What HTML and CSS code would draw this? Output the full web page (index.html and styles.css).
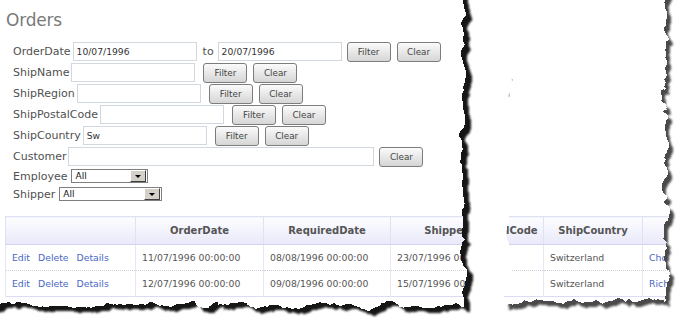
FILE: index.html
```html
<!DOCTYPE html>
<html lang="en">
<head>
<meta charset="UTF-8">
<title>Orders</title>
<link rel="stylesheet" href="styles.css">
</head>
<body>
<div class="sheet">
	<div class="page left">
		<h1>Orders</h1>
		<div class="filters">
			<div class="row">
				<label>OrderDate</label><input class="txt" type="text" value="10/07/1996">
				<span class="to">to</span><input class="txt" type="text" value="20/07/1996">
				<button class="btn first tight">Filter</button><button class="btn">Clear</button>
			</div>
			<div class="row">
				<label>ShipName</label><input class="txt" type="text">
				<button class="btn first">Filter</button><button class="btn">Clear</button>
			</div>
			<div class="row">
				<label>ShipRegion</label><input class="txt" type="text">
				<button class="btn first">Filter</button><button class="btn">Clear</button>
			</div>
			<div class="row">
				<label>ShipPostalCode</label><input class="txt" type="text">
				<button class="btn first">Filter</button><button class="btn">Clear</button>
			</div>
			<div class="row">
				<label>ShipCountry</label><input class="txt" type="text" value="Sw">
				<button class="btn first">Filter</button><button class="btn">Clear</button>
			</div>
			<div class="row">
				<label>Customer</label><input class="txt wide" type="text">
				<button class="btn first tight">Clear</button>
			</div>
			<div class="row sel">
				<label>Employee</label>
				<span class="select emp"><span class="val">All</span><span class="arr"></span></span>
			</div>
			<div class="row sel">
				<label>Shipper</label>
				<span class="select shp"><span class="val">All</span><span class="arr"></span></span>
			</div>
		</div>

		<table class="grid main">
			<colgroup><col class="c1"><col class="c2"><col class="c3"><col class="c4"></colgroup>
			<thead>
				<tr><th></th><th>OrderDate</th><th>RequiredDate</th><th>ShippedDate</th></tr>
			</thead>
			<tbody>
				<tr>
					<td><a href="#">Edit</a><a href="#">Delete</a><a href="#">Details</a></td>
					<td>11/07/1996 00:00:00</td><td>08/08/1996 00:00:00</td><td>23/07/1996 00:00:00</td>
				</tr>
				<tr>
					<td><a href="#">Edit</a><a href="#">Delete</a><a href="#">Details</a></td>
					<td>12/07/1996 00:00:00</td><td>09/08/1996 00:00:00</td><td>15/07/1996 00:00:00</td>
				</tr>
			</tbody>
		</table>
	</div>

	<div class="page right">
		<table class="grid shifted">
			<colgroup><col class="p1"><col class="p2"><col class="p3"></colgroup>
			<thead>
				<tr><th>ShipPostalCode</th><th>ShipCountry</th><th>ShipName</th></tr>
			</thead>
			<tbody>
				<tr><td>3012</td><td>Switzerland</td><td><a href="#">Chop-suey Chinese</a></td></tr>
				<tr><td>1203</td><td>Switzerland</td><td><a href="#">Richter Supermarkt</a></td></tr>
			</tbody>
		</table>
	</div>
</div>

<!-- torn paper edges, drawn over the page -->
<svg class="tear" width="684" height="330" viewBox="0 0 684 330">
	<defs>
		<filter id="rip" filterUnits="userSpaceOnUse" x="-40" y="-40" width="764" height="410" color-interpolation-filters="sRGB">
			<feTurbulence type="fractalNoise" baseFrequency="0.045" numOctaves="4" seed="7" result="n"/>
			<feDisplacementMap in="SourceGraphic" in2="n" scale="16" xChannelSelector="R" yChannelSelector="G"/>
		</filter>
		<filter id="dropL" filterUnits="userSpaceOnUse" x="-40" y="-40" width="764" height="410" color-interpolation-filters="sRGB">
			<feTurbulence type="fractalNoise" baseFrequency="0.045" numOctaves="4" seed="7" result="n"/>
			<feDisplacementMap in="SourceGraphic" in2="n" scale="16" xChannelSelector="R" yChannelSelector="G"/>
			<feOffset dx="6" dy="5"/>
			<feGaussianBlur stdDeviation="1.1"/>
		</filter>
		<filter id="dropR" filterUnits="userSpaceOnUse" x="-40" y="-40" width="764" height="410" color-interpolation-filters="sRGB">
			<feTurbulence type="fractalNoise" baseFrequency="0.045" numOctaves="4" seed="7" result="n"/>
			<feDisplacementMap in="SourceGraphic" in2="n" scale="16" xChannelSelector="R" yChannelSelector="G"/>
			<feOffset dx="4" dy="5"/>
			<feGaussianBlur stdDeviation="1.2"/>
		</filter>
		<mask id="outside" maskUnits="userSpaceOnUse" x="0" y="0" width="684" height="330">
			<rect width="684" height="330" fill="#fff"/>
			<g filter="url(#rip)" fill="#000">
				<rect x="-40" y="-40" width="503" height="346"/>
				<rect x="509" y="-40" width="157" height="342"/>
			</g>
		</mask>
	</defs>
	<g mask="url(#outside)">
		<rect width="684" height="330" fill="#fff"/>
		<rect x="-40" y="-40" width="503" height="346" fill="#161616" filter="url(#dropL)"/>
		<rect x="509" y="-40" width="157" height="342" fill="#4a4a4a" filter="url(#dropR)"/>
	</g>
</svg>
</body>
</html>
```

FILE: styles.css
```css
body{
	margin:0;
	background:#fff;
	font-family:"DejaVu Sans", Verdana, sans-serif;
	color:#505050;
	position:relative;
	width:684px;
	height:330px;
	overflow:hidden;
}
.sheet{
	display:flex;
	height:330px;
}
.page{
	flex:none;
	height:330px;
	overflow:hidden;
}
.left{
	width:480px;
}
.right{
	width:184px;
	margin-left:20px;
}
.tear{
	position:absolute;
	top:0;
	left:0;
	pointer-events:none;
}
h1{
	margin:9px 0 0 6px;
	font-size:17px;
	line-height:22px;
	font-weight:normal;
	letter-spacing:-0.2px;
	color:#7a7a7a;
}

/* filter rows */
.filters{
	margin:10px 0 0 13px;
}
.row{
	display:flex;
	align-items:center;
	height:21px;
	white-space:nowrap;
}
.row.sel{
	height:18px;
}
.row label{
	font-size:11px;
	margin-right:2px;
}
.txt{
	box-sizing:border-box;
	width:124px;
	height:19px;
	margin:0;
	padding:0 3px;
	border:1px solid #d2d8e0;
	background:#fff;
	font-family:"DejaVu Sans", Verdana, sans-serif;
	font-size:9.2px;
	color:#333;
	outline:none;
}
.txt.wide{
	width:306px;
}
.to{
	font-size:11px;
	margin:0 4px 0 6px;
}
.btn{
	box-sizing:border-box;
	width:44px;
	height:20px;
	margin:0 0 0 6px;
	padding:0;
	border:1px solid #7c7c7c;
	border-radius:3px;
	background:linear-gradient(#fbfbfb, #e6e6e6 55%, #d6d6d6);
	font-family:"DejaVu Sans", Verdana, sans-serif;
	font-size:8.8px;
	color:#454545;
}
.btn.first{
	margin-left:8px;
}
.btn.tight{
	margin-left:5px;
}

/* drop downs */
.select{
	box-sizing:border-box;
	display:flex;
	align-items:center;
	height:14px;
	border:1px solid #7f7f7f;
	background:#fff;
	margin-left:2px;
}
.select.emp{
	width:77px;
}
.select.shp{
	width:103px;
}
.select .val{
	flex:1;
	padding-left:3px;
	font-size:9px;
	color:#111;
}
.select .arr{
	box-sizing:border-box;
	width:16px;
	height:12px;
	margin-right:1px;
	background:#d4d0c8;
	border-top:1px solid #fff;
	border-left:1px solid #fff;
	border-right:1px solid #404040;
	border-bottom:1px solid #404040;
	display:flex;
	align-items:center;
	justify-content:center;
}
.select .arr::after{
	content:"";
	border-left:3px solid transparent;
	border-right:3px solid transparent;
	border-top:3px solid #000;
	margin-top:1px;
}

/* grid */
.grid{
	border-collapse:collapse;
	table-layout:fixed;
	margin:13px 0 0 5px;
	border:1px solid #d9dcf3;
	font-size:9.3px;
}
.grid.main{
	width:525px;
}
.grid.shifted{
	width:329px;
	margin:216px 0 0 -57px;
}
.c1{width:130px;}
.c2{width:128px;}
.c3{width:127px;}
.c4{width:140px;}
.p1{width:100px;}
.p2{width:99px;}
.p3{width:130px;}
.grid th{
	height:27px;
	padding:0 4px;
	background:linear-gradient(#fdfdff, #f1f1fc 60%, #e8e8f8);
	border:1px solid #dfe1f4;
	border-bottom-color:#d0d4f0;
	font-size:10px;
	font-weight:bold;
	color:#555;
	text-align:center;
	white-space:nowrap;
	overflow:hidden;
}
.grid td{
	height:25px;
	padding:0 6px;
	border-left:1px solid #e6e7f2;
	border-right:1px solid #e6e7f2;
	color:#555;
	white-space:nowrap;
	overflow:hidden;
}
.grid tbody tr + tr td{
	border-top:1px dotted #cfd0dc;
}
.grid a{
	color:#4a68c4;
	text-decoration:none;
	margin-right:8px;
}
```
